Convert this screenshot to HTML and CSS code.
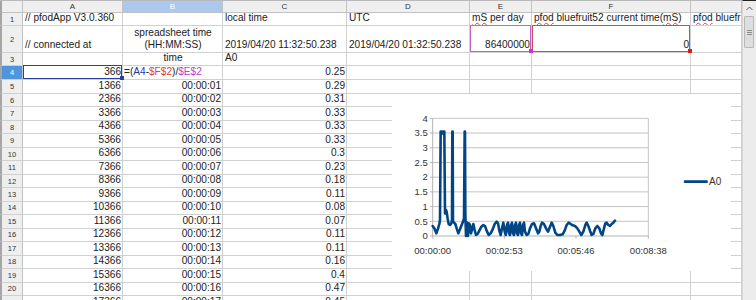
FILE: index.html
```html
<!DOCTYPE html>
<html>
<head>
<meta charset="utf-8">
<link rel="stylesheet" href="styles.css">
</head>
<body>
<div class="app">
  <div class="sheet">
    <div class="grid">
      <div class="corner"></div>
      <div class="ch">A</div><div class="ch sel">B</div><div class="ch">C</div><div class="ch">D</div><div class="ch">E</div><div class="ch">F</div><div class="ch"></div>

      <div class="rh">1</div>
      <div class="c">// pfodApp V3.0.360</div><div class="c"></div><div class="c">local time</div><div class="c">UTC</div>
      <div class="c"><span class="sp">mS</span>&nbsp;per day</div>
      <div class="c"><span class="sp">pfod</span>&nbsp;bluefruit52 current time(<span class="sp">mS</span>)</div>
      <div class="c"><span class="sp">pfod</span>&nbsp;bluefruit52 millis</div>

      <div class="rh">2</div>
      <div class="c">// connected at</div>
      <div class="c ctr"><span class="blk">spreadsheet time<br>(HH:MM:SS)</span></div>
      <div class="c">2019/04/20 11:32:50.238</div>
      <div class="c">2019/04/20 01:32:50.238</div>
      <div class="c r ref ref-mag">86400000</div>
      <div class="c r ref ref-red">0</div>
      <div class="c"></div>

      <div class="rh">3</div>
      <div class="c"></div><div class="c ctr">time</div><div class="c">A0</div><div class="c"></div><div class="c"></div><div class="c"></div><div class="c"></div>

      <div class="rh cur">4</div>
      <div class="c r ref ref-blue">366</div>
      <div class="c edit">=(<span class="f-blue">A4</span>-<span class="f-red">$F$2</span>)/<span class="f-mag">$E$2</span></div>
      <div class="c r">0.25</div><div class="c"></div><div class="c"></div><div class="c"></div><div class="c"></div>

      <div class="rh">5</div><div class="c r">1366</div><div class="c r">00:00:01</div><div class="c r">0.29</div><div class="c"></div><div class="c"></div><div class="c"></div><div class="c"></div>
      <div class="rh">6</div><div class="c r">2366</div><div class="c r">00:00:02</div><div class="c r">0.31</div><div class="c"></div><div class="c"></div><div class="c"></div><div class="c"></div>
      <div class="rh">7</div><div class="c r">3366</div><div class="c r">00:00:03</div><div class="c r">0.33</div><div class="c"></div><div class="c"></div><div class="c"></div><div class="c"></div>
      <div class="rh">8</div><div class="c r">4366</div><div class="c r">00:00:04</div><div class="c r">0.33</div><div class="c"></div><div class="c"></div><div class="c"></div><div class="c"></div>
      <div class="rh">9</div><div class="c r">5366</div><div class="c r">00:00:05</div><div class="c r">0.33</div><div class="c"></div><div class="c"></div><div class="c"></div><div class="c"></div>
      <div class="rh">10</div><div class="c r">6366</div><div class="c r">00:00:06</div><div class="c r">0.3</div><div class="c"></div><div class="c"></div><div class="c"></div><div class="c"></div>
      <div class="rh">11</div><div class="c r">7366</div><div class="c r">00:00:07</div><div class="c r">0.23</div><div class="c"></div><div class="c"></div><div class="c"></div><div class="c"></div>
      <div class="rh">12</div><div class="c r">8366</div><div class="c r">00:00:08</div><div class="c r">0.18</div><div class="c"></div><div class="c"></div><div class="c"></div><div class="c"></div>
      <div class="rh">13</div><div class="c r">9366</div><div class="c r">00:00:09</div><div class="c r">0.11</div><div class="c"></div><div class="c"></div><div class="c"></div><div class="c"></div>
      <div class="rh">14</div><div class="c r">10366</div><div class="c r">00:00:10</div><div class="c r">0.08</div><div class="c"></div><div class="c"></div><div class="c"></div><div class="c"></div>
      <div class="rh">15</div><div class="c r">11366</div><div class="c r">00:00:11</div><div class="c r">0.07</div><div class="c"></div><div class="c"></div><div class="c"></div><div class="c"></div>
      <div class="rh">16</div><div class="c r">12366</div><div class="c r">00:00:12</div><div class="c r">0.11</div><div class="c"></div><div class="c"></div><div class="c"></div><div class="c"></div>
      <div class="rh">17</div><div class="c r">13366</div><div class="c r">00:00:13</div><div class="c r">0.11</div><div class="c"></div><div class="c"></div><div class="c"></div><div class="c"></div>
      <div class="rh">18</div><div class="c r">14366</div><div class="c r">00:00:14</div><div class="c r">0.16</div><div class="c"></div><div class="c"></div><div class="c"></div><div class="c"></div>
      <div class="rh">19</div><div class="c r">15366</div><div class="c r">00:00:15</div><div class="c r">0.4</div><div class="c"></div><div class="c"></div><div class="c"></div><div class="c"></div>
      <div class="rh">20</div><div class="c r">16366</div><div class="c r">00:00:16</div><div class="c r">0.47</div><div class="c"></div><div class="c"></div><div class="c"></div><div class="c"></div>
      <div class="rh">21</div><div class="c r">17366</div><div class="c r">00:00:17</div><div class="c r">0.45</div><div class="c"></div><div class="c"></div><div class="c"></div><div class="c"></div>
    </div>

    <div class="chart">
      <svg width="339" height="177" viewBox="0 0 339 177">
        <g transform="translate(-2 6) scale(0.333333)">
          <g class="grid-lines">
            <line x1="128" y1="55" x2="775" y2="55"/>
            <line x1="128" y1="99.1" x2="775" y2="99.1"/>
            <line x1="128" y1="143.3" x2="775" y2="143.3"/>
            <line x1="128" y1="187.4" x2="775" y2="187.4"/>
            <line x1="128" y1="231.5" x2="775" y2="231.5"/>
            <line x1="128" y1="275.6" x2="775" y2="275.6"/>
            <line x1="128" y1="319.8" x2="775" y2="319.8"/>
            <line x1="128" y1="363.9" x2="775" y2="363.9"/>
            <line x1="775" y1="55" x2="775" y2="408"/>
          </g>
          <g class="axis">
            <line x1="128" y1="55" x2="128" y2="416"/>
            <line x1="120" y1="408" x2="775" y2="408"/>
            <line x1="120" y1="55" x2="128" y2="55"/>
            <line x1="120" y1="99.1" x2="128" y2="99.1"/>
            <line x1="120" y1="143.3" x2="128" y2="143.3"/>
            <line x1="120" y1="187.4" x2="128" y2="187.4"/>
            <line x1="120" y1="231.5" x2="128" y2="231.5"/>
            <line x1="120" y1="275.6" x2="128" y2="275.6"/>
            <line x1="120" y1="319.8" x2="128" y2="319.8"/>
            <line x1="120" y1="363.9" x2="128" y2="363.9"/>
            <line x1="343" y1="408" x2="343" y2="416"/>
            <line x1="558" y1="408" x2="558" y2="416"/>
            <line x1="775" y1="408" x2="775" y2="416"/>
          </g>
          <g class="ylab">
            <text x="113" y="65">4</text>
            <text x="113" y="109">3.5</text>
            <text x="113" y="153">3</text>
            <text x="113" y="197">2.5</text>
            <text x="113" y="241">2</text>
            <text x="113" y="286">1.5</text>
            <text x="113" y="330">1</text>
            <text x="113" y="374">0.5</text>
            <text x="113" y="418">0</text>
          </g>
          <g class="xlab">
            <text x="128" y="461">00:00:00</text>
            <text x="343" y="461">00:02:53</text>
            <text x="558" y="461">00:05:46</text>
            <text x="775" y="461">00:08:38</text>
          </g>
          <polyline class="series" points="128,378 133,385 139,400 144,386 148,372 150,360 152,95 156,95 158,100 160,95 163,95 165,340 168,330 170,336 173,356 176,372 180,375 184,370 186,360 187,95 188,95 189,365 192,368 196,372 200,385 205,400 210,388 215,375 220,362 222,355 224,95 225,95 226,340 228,408 231,368 234,408 237,370 240,375 243,400 247,385 250,372 254,390 258,405 263,402 268,392 274,380 280,375 285,378 290,392 296,405 302,400 308,388 314,372 320,365 324,370 328,392 332,405 336,385 340,368 344,395 347,405 351,375 354,368 357,400 360,405 363,375 366,368 369,400 372,405 375,375 378,368 381,400 384,405 387,375 390,368 393,400 396,405 399,375 402,368 405,395 410,405 415,402 420,385 426,372 432,370 438,385 444,400 448,395 452,378 456,368 462,372 468,385 474,395 480,380 485,368 490,378 496,398 502,405 510,405 518,403 524,392 530,375 536,368 542,372 548,376 555,378 562,385 568,395 574,405 580,395 586,375 590,368 595,378 600,392 605,405 610,402 616,385 622,378 628,385 633,400 637,405 642,385 646,370 650,368 655,375 660,378 665,372 670,368 675,362"/>
          <line class="series" x1="885" y1="245" x2="950" y2="245"/>
          <text class="legend" x="957" y="256">A0</text>
        </g>
      </svg>
    </div>
  </div>

  <div class="vscroll">
    <div class="vs-up">
      <svg width="7" height="5" viewBox="0 0 7 5"><path d="M0.5 4 L3.5 1 L6.5 4" fill="none" stroke="#555" stroke-width="1"/></svg>
    </div>
    <div class="vs-thumb">
      <span class="grip"></span><span class="grip"></span><span class="grip"></span>
    </div>
  </div>
</div>
</body>
</html>
```

FILE: styles.css
```css
* { box-sizing: border-box; }
html, body { margin: 0; padding: 0; }
body {
  width: 756px;
  height: 300px;
  overflow: hidden;
  background: #fff;
  font-family: "Liberation Sans", Arial, sans-serif;
  color: #222;
}
.app {
  display: flex;
  width: 756px;
  height: 300px;
}
.sheet {
  position: relative;
  width: 742px;
  height: 300px;
  overflow: hidden;
  border-top: 1px solid #b9b9b9;
}
.grid {
  display: grid;
  grid-template-columns: 23px 100px 100px 124px 123px 62px 159px 51px;
  grid-template-rows: 12px 13px 27px 13px 14px 14px repeat(16, 13.47px);
}
.corner, .ch {
  background: #efefef;
  border-right: 1px solid #c2c2c2;
  border-bottom: 1px solid #c2c2c2;
}
.corner { border-left: 2px solid #a5a5a5; }
.ch {
  font-size: 8px;
  color: #333;
  display: flex;
  align-items: center;
  justify-content: center;
}
.ch.sel {
  background: #abc9ee;
  color: #fff;
}
.rh {
  background: #efefef;
  border-left: 2px solid #a5a5a5;
  border-right: 1px solid #c2c2c2;
  border-bottom: 1px solid #d0d0d0;
  font-size: 7.5px;
  color: #333;
  display: flex;
  align-items: center;
  justify-content: center;
}
.rh.cur {
  background: #4f95de;
  color: #fff;
}
.c {
  position: relative;
  border-right: 1px solid #d0d0d0;
  border-bottom: 1px solid #d0d0d0;
  font-size: 10.1px;
  line-height: 12px;
  padding: 0 1px 1px 2px;
  display: flex;
  align-items: flex-end;
  white-space: nowrap;
  overflow: hidden;
}
.c.r { justify-content: flex-end; }
.c.ctr { justify-content: center; }
.blk { display: block; text-align: center; white-space: normal; }
.sp {
  text-decoration: underline wavy #e0403a;
  text-decoration-thickness: 1px;
  text-underline-offset: 1px;
}
.c.edit { padding-left: 1px; }
.f-blue { color: #23399e; }
.f-red { color: #e5402f; }
.f-mag { color: #c43ccc; }

.ref { overflow: visible; }
.ref::after {
  content: "";
  position: absolute;
  top: -1px;
  left: 0;
  right: 0;
  bottom: 0;
  border: 1px solid;
  pointer-events: none;
}
.ref::before {
  content: "";
  position: absolute;
  right: -2px;
  bottom: -1px;
  width: 4px;
  height: 4px;
  z-index: 2;
}
.ref-blue::after { border-color: #2c3f9c; }
.ref-blue::before { background: #2c3f9c; }
.ref-mag::after { border-color: #c862c8; }
.ref-mag::before { background: #cc33cc; }
.ref-red::after { border-color: #c65058; }
.ref-red::before { background: #e01818; }

.chart {
  position: absolute;
  left: 392px;
  top: 93px;
  width: 339px;
  height: 177px;
  background: #fff;
}
.chart svg { display: block; }
.grid-lines line {
  stroke: #c4c4c4;
  stroke-width: 1;
  vector-effect: non-scaling-stroke;
}
.axis line {
  stroke: #b3b3b3;
  stroke-width: 1;
  vector-effect: non-scaling-stroke;
}
.ylab text, .xlab text, .legend {
  font-family: "Liberation Sans", Arial, sans-serif;
  font-size: 28.5px;
  fill: #333;
}
.ylab text { text-anchor: end; }
.xlab text { text-anchor: middle; }
.legend { font-size: 30px; }
.series {
  fill: none;
  stroke: #004586;
  stroke-width: 2.6;
  stroke-linejoin: round;
  stroke-linecap: round;
  vector-effect: non-scaling-stroke;
}

.vscroll {
  width: 14px;
  height: 300px;
  background: #ececec;
  border-top: 1px solid #222;
  border-left: 1px solid #d6d6d6;
  display: flex;
  flex-direction: column;
  align-items: flex-start;
}
.vs-up {
  width: 13px;
  height: 15px;
  display: flex;
  align-items: center;
  justify-content: center;
}
.vs-thumb {
  margin-left: 1px;
  width: 10px;
  height: 32px;
  background: #dedede;
  border: 1px solid #b9b9b9;
  border-radius: 1px;
  display: flex;
  flex-direction: column;
  justify-content: center;
  align-items: center;
  gap: 1px;
}
.grip {
  display: block;
  width: 5px;
  height: 1px;
  background: #8c8c8c;
}
```
